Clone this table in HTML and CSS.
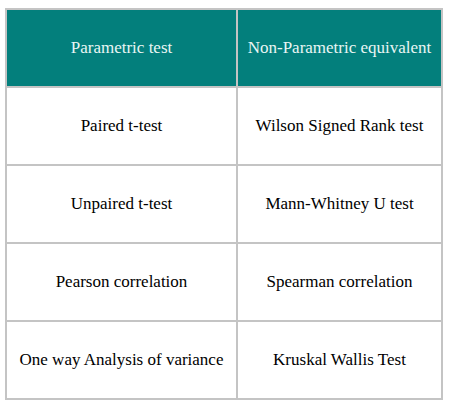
FILE: index.html
```html
<!DOCTYPE html>
<html>
<head>
<meta charset="utf-8">
<link rel="stylesheet" href="styles.css">
</head>
<body>
<div class="grid">
  <div class="cell head"><p class="txt">Parametric test</p></div>
  <div class="cell head"><p class="txt">Non-Parametric equivalent</p></div>
  <div class="cell"><p class="txt">Paired t-test</p></div>
  <div class="cell"><p class="txt">Wilson Signed Rank test</p></div>
  <div class="cell"><p class="txt">Unpaired t-test</p></div>
  <div class="cell"><p class="txt">Mann-Whitney U test</p></div>
  <div class="cell"><p class="txt">Pearson correlation</p></div>
  <div class="cell"><p class="txt">Spearman correlation</p></div>
  <div class="cell"><p class="txt">One way Analysis of variance</p></div>
  <div class="cell"><p class="txt">Kruskal Wallis Test</p></div>
</div>
</body>
</html>
```
FILE: styles.css
```css
html, body {
  margin: 0;
  padding: 0;
  background: #ffffff;
}
.grid {
  margin: 8px 0 0 5px;
  width: 438px;
  box-sizing: border-box;
  display: grid;
  grid-template-columns: 229px 203px;
  grid-auto-rows: 76px;
  gap: 2px;
  padding: 2px;
  background: #c4c4c4;
  color: #000;
}
.cell {
  background: #ffffff;
  display: flex;
  align-items: center;
  justify-content: center;
  text-align: center;
}
.txt {
  margin: 0;
  font: normal 400 17px/1.2 "Liberation Serif", "Times New Roman", "DejaVu Serif", serif;
}
.head {
  background: #037f7c;
  color: #e9f6f4;
}
```
